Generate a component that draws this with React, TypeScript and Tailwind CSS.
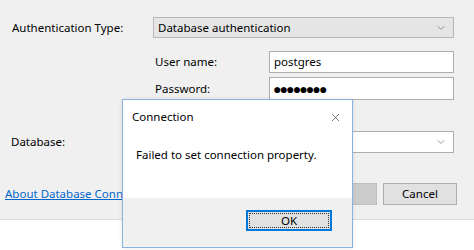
import { ChevronDown, X } from 'lucide-react';

export default function App() {
  return (
    <div className="relative w-[474px] h-[250px] overflow-hidden bg-white text-black text-[11.5px] font-['Noto_Sans',sans-serif]">
      {/* login dialog behind */}
      <div className="h-[220px] bg-[#f0f0f0] border-b border-[#dcdcdc]">
        <div className="flex items-center pt-[17px]">
          <span className="w-[153px] pl-[12px]">Authentication Type:</span>
          <div className="flex items-center justify-between w-[301px] h-[21px] pl-[4px] pr-[6px] bg-[#e5e5e5] border border-[#b8b8b8]">
            <span>Database authentication</span>
            <ChevronDown size={12} strokeWidth={1.5} className="text-[#7a7a7a]" />
          </div>
        </div>

        <div className="flex items-center mt-[13px] ml-[155px]">
          <span className="w-[114px]">User name:</span>
          <div className="w-[185px] h-[22px] pl-[4px] flex items-center bg-white border border-[#adadad]">postgres</div>
        </div>
        <div className="flex items-center mt-[4px] ml-[155px]">
          <span className="w-[114px]">Password:</span>
          <div className="w-[185px] h-[23px] pl-[3px] flex items-center bg-white border border-[#adadad] text-[14px] tracking-[-1.9px]">●●●●●●●●</div>
        </div>

        <div className="flex items-center mt-[31px]">
          <span className="w-[269px] pl-[11px]">Database:</span>
          <div className="flex items-center justify-end w-[185px] h-[22px] pr-[6px] bg-white border border-[#adadad]">
            <ChevronDown size={12} strokeWidth={1.5} className="text-[#7a7a7a]" />
          </div>
        </div>

        <div className="flex items-center mt-[30px]">
          <a className="pl-[5px] text-[#0066cc] underline whitespace-nowrap">About Database Connections</a>
          <div className="ml-auto flex gap-[6px] pr-[17px]">
            <div className="w-[74px] h-[22px] bg-[#cccccc] border border-[#bfbfbf]" />
            <div className="w-[74px] h-[22px] flex items-center justify-center bg-[#e1e1e1] border border-[#adadad]">Cancel</div>
          </div>
        </div>
      </div>

      {/* message box */}
      <div className="absolute left-[122px] top-[99px] w-[231px] h-[149px] flex flex-col border border-[#8ab4dd] bg-white shadow-[0_0_4px_rgba(0,0,0,0.1)]">
        <div className="flex-1 bg-white">
          <div className="flex items-center justify-between h-[33px] pl-[9px] pr-[10px] pt-[1px]">
            <span>Connection</span>
            <X size={13} strokeWidth={1.2} className="text-[#333]" />
          </div>
          <p className="pl-[13px] mt-[13px]">Failed to set connection property.</p>
        </div>
        <div className="h-[49px] flex items-center justify-end pr-[20px] pb-[4px] bg-[#f0f0f0]">
          <div className="w-[86px] h-[21px] flex items-center justify-center bg-[#e1e1e1] border-2 border-[#0078d7] outline outline-1 outline-dotted outline-offset-[-4px] outline-[#333]">
            OK
          </div>
        </div>
      </div>
    </div>
  );
}
